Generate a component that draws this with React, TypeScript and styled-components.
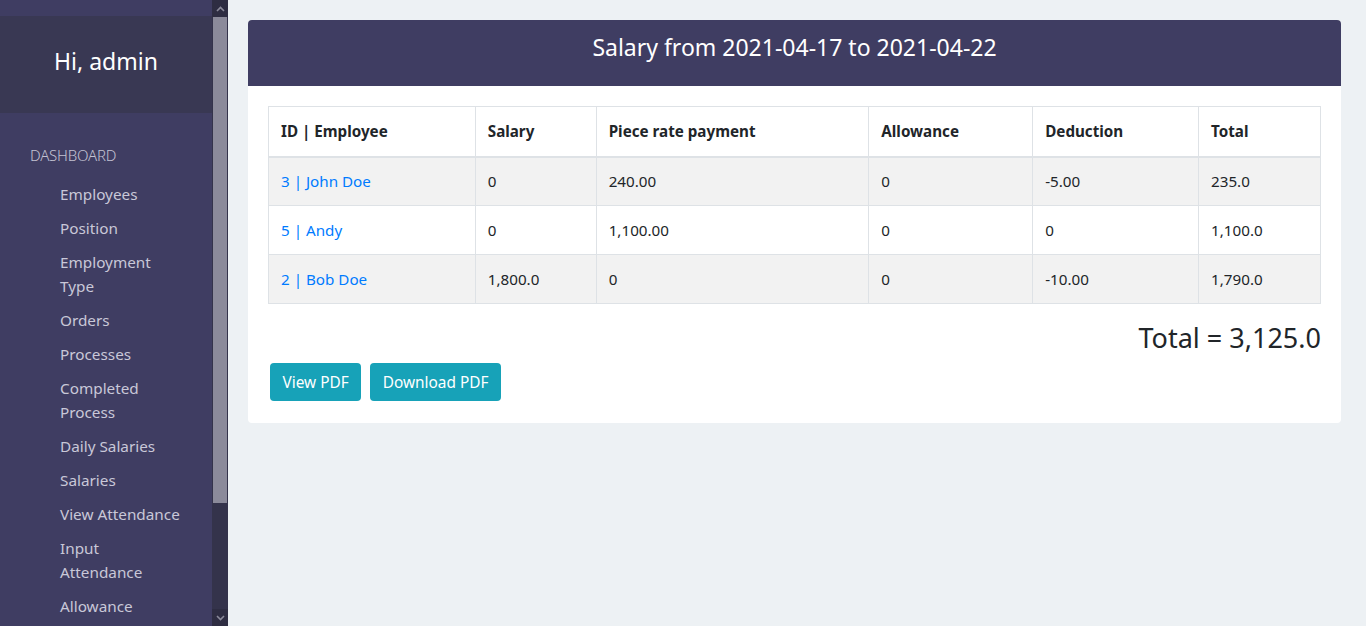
import React from "react";
import styled, { createGlobalStyle } from "styled-components";

const Global = createGlobalStyle`
  html, body { margin: 0; padding: 0; height: 100%; }
  body { font-family: "Noto Sans", "Open Sans", sans-serif; color: #212529; background: #edf1f4; }
  #root { height: 100%; }
  * { box-sizing: border-box; }
`;

const Page = styled.div`
  display: flex;
  height: 626px;
  overflow: hidden;
`;

const Sidebar = styled.aside`
  width: 212px;
  flex: none;
  background: #3f3d62;
  padding-top: 16px;
  overflow: hidden;
  display: flex;
  flex-direction: column;
  & > * { flex-shrink: 0; }
`;

const Greeting = styled.div`
  background: #393853;
  height: 97px;
  display: flex;
  align-items: center;
  justify-content: center;
  color: #fff;
  font-size: 23px;
  padding-bottom: 8px;
`;

const Section = styled.div`
  padding: 31px 0 0 30px;
  color: #c3c2d2;
  font-size: 15px;
  font-weight: 300;
  line-height: 22px;
  letter-spacing: -0.2px;
`;

const NavList = styled.ul`
  list-style: none;
  margin: 0;
  padding: 16px 0 0 60px;
  display: flex;
  flex-direction: column;
  gap: 10px;
`;

const NavItem = styled.li`
  color: #c9c8d8;
  font-size: 15.3px;
  line-height: 24px;
`;

const ScrollBar = styled.div`
  width: 16px;
  flex: none;
  background: #34334b;
  display: flex;
  flex-direction: column;
`;

const ScrollButton = styled.div`
  height: 17px;
  background: #2e2d42;
  display: flex;
  align-items: center;
  justify-content: center;
`;

const Thumb = styled.div`
  height: 486px;
  background: #8b8a9a;
  margin: 0 1px;
`;

const Track = styled.div`
  flex: 1;
`;

const Main = styled.main`
  flex: 1;
  padding: 20px 25px 20px 20px;
`;

const Card = styled.section`
  background: #fff;
  border-radius: 4px;
  overflow: hidden;
`;

const CardHeader = styled.h1`
  margin: 0;
  height: 66px;
  background: #3f3d62;
  color: #fff;
  font-size: 23px;
  font-weight: 400;
  display: flex;
  align-items: center;
  justify-content: center;
  padding-bottom: 12px;
`;

const CardBody = styled.div`
  padding: 20px;
`;

const Table = styled.table`
  width: 100%;
  border-collapse: collapse;
  font-size: 15.2px;
  border: 1px solid #dee2e6;
`;

const Th = styled.th<{ $w: number }>`
  width: ${(p) => p.$w}px;
  text-align: left;
  font-weight: 700;
  padding: 12px 12px;
  height: 50px;
  border: 1px solid #dee2e6;
  border-bottom: 2px solid #dee2e6;
`;

const Tr = styled.tr<{ $striped: boolean }>`
  background: ${(p) => (p.$striped ? "#f2f2f2" : "#fff")};
`;

const Td = styled.td`
  padding: 12px 12px;
  height: 49px;
  border: 1px solid #dee2e6;
`;

const Link = styled.a`
  color: #007bff;
  text-decoration: none;
`;

const TotalLine = styled.div`
  text-align: right;
  font-size: 27px;
  line-height: 36px;
  margin-top: 16px;
  color: #212529;
`;

const Buttons = styled.div`
  display: flex;
  gap: 9px;
  padding: 0 0 2px 2px;
  margin-top: 7px;
`;

const Button = styled.button`
  background: #17a2b8;
  color: #fff;
  border: none;
  border-radius: 4px;
  font-family: inherit;
  font-size: 15.4px;
  height: 38px;
  padding: 0 12.5px;
`;

const Chevron = ({ up }: { up: boolean }) => (
  <svg width="9" height="6" viewBox="0 0 9 6">
    <path
      d={up ? "M1 5 L4.5 1.5 L8 5" : "M1 1 L4.5 4.5 L8 1"}
      stroke="#8b8a9a"
      strokeWidth="1.6"
      fill="none"
    />
  </svg>
);

const navItems: string[][] = [
  ["Employees"],
  ["Position"],
  ["Employment", "Type"],
  ["Orders"],
  ["Processes"],
  ["Completed", "Process"],
  ["Daily Salaries"],
  ["Salaries"],
  ["View Attendance"],
  ["Input", "Attendance"],
  ["Allowance"],
];

const columns: [string, number][] = [
  ["ID | Employee", 207],
  ["Salary", 121],
  ["Piece rate payment", 273],
  ["Allowance", 164],
  ["Deduction", 166],
  ["Total", 122],
];

const rows = [
  ["3 | John Doe", "0", "240.00", "0", "-5.00", "235.0"],
  ["5 | Andy", "0", "1,100.00", "0", "0", "1,100.0"],
  ["2 | Bob Doe", "1,800.0", "0", "0", "-10.00", "1,790.0"],
];

export default function App() {
  return (
    <>
      <Global />
      <Page>
        <Sidebar>
          <Greeting>Hi, admin</Greeting>
          <Section>DASHBOARD</Section>
          <NavList>
            {navItems.map((lines) => (
              <NavItem key={lines.join(" ")}>
                {lines.map((l, i) => (
                  <React.Fragment key={l}>
                    {i > 0 && <br />}
                    {l}
                  </React.Fragment>
                ))}
              </NavItem>
            ))}
          </NavList>
        </Sidebar>
        <ScrollBar>
          <ScrollButton>
            <Chevron up />
          </ScrollButton>
          <Thumb />
          <Track />
          <ScrollButton>
            <Chevron up={false} />
          </ScrollButton>
        </ScrollBar>
        <Main>
          <Card>
            <CardHeader>Salary from 2021-04-17 to 2021-04-22</CardHeader>
            <CardBody>
              <Table>
                <thead>
                  <tr>
                    {columns.map(([c, w]) => (
                      <Th key={c} $w={w}>
                        {c}
                      </Th>
                    ))}
                  </tr>
                </thead>
                <tbody>
                  {rows.map((r, i) => (
                    <Tr key={r[0]} $striped={i % 2 === 0}>
                      <Td>
                        <Link href="#">{r[0]}</Link>
                      </Td>
                      {r.slice(1).map((v, j) => (
                        <Td key={j}>{v}</Td>
                      ))}
                    </Tr>
                  ))}
                </tbody>
              </Table>
              <TotalLine>Total = 3,125.0</TotalLine>
              <Buttons>
                <Button>View PDF</Button>
                <Button>Download PDF</Button>
              </Buttons>
            </CardBody>
          </Card>
        </Main>
      </Page>
    </>
  );
}
